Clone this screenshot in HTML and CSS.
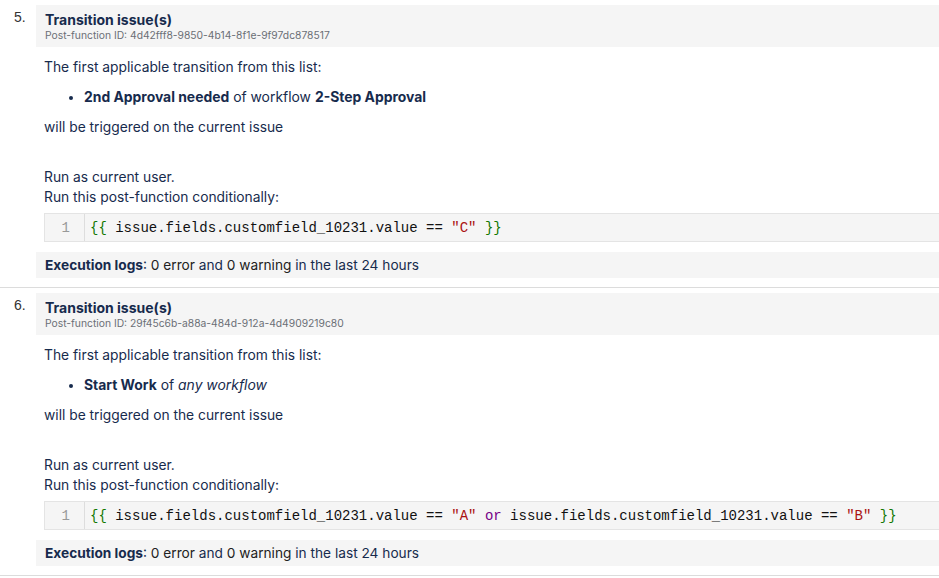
FILE: index.html
```html
<!DOCTYPE html>
<html>
<head>
<meta charset="utf-8">
<link rel="stylesheet" href="styles.css">
</head>
<body>
<div class="list">
  <div class="item">
    <div class="num">5.</div>
    <div class="main">
      <div class="head">
        <div class="title">Transition issue(s)</div>
        <div class="sub">Post-function ID: 4d42fff8-9850-4b14-8f1e-9f97dc878517</div>
      </div>
      <div class="body">
        <p class="line">The first applicable transition from this list:</p>
        <ul class="trans">
          <li><b>2nd Approval needed</b> of workflow <b>2-Step Approval</b></li>
        </ul>
        <p class="line">will be triggered on the current issue</p>
        <p class="line run">Run as current user.</p>
        <p class="line">Run this post-function conditionally:</p>
        <div class="code">
          <div class="gutter">1</div>
          <div class="src"><span class="br">{{</span> issue.fields.customfield_10231.value == <span class="str">"C"</span> <span class="br">}}</span></div>
        </div>
      </div>
      <div class="logs"><b>Execution logs</b>: <span class="k">0 error</span> and <span class="k">0 warning</span> in the last 24 hours</div>
    </div>
  </div>
  <div class="item">
    <div class="num">6.</div>
    <div class="main">
      <div class="head">
        <div class="title">Transition issue(s)</div>
        <div class="sub">Post-function ID: 29f45c6b-a88a-484d-912a-4d4909219c80</div>
      </div>
      <div class="body">
        <p class="line">The first applicable transition from this list:</p>
        <ul class="trans">
          <li><b>Start Work</b> of <i>any workflow</i></li>
        </ul>
        <p class="line">will be triggered on the current issue</p>
        <p class="line run">Run as current user.</p>
        <p class="line">Run this post-function conditionally:</p>
        <div class="code">
          <div class="gutter">1</div>
          <div class="src"><span class="br">{{</span> issue.fields.customfield_10231.value == <span class="str">"A"</span> <span class="kw">or</span> issue.fields.customfield_10231.value == <span class="str">"B"</span> <span class="br">}}</span></div>
        </div>
      </div>
      <div class="logs"><b>Execution logs</b>: <span class="k">0 error</span> and <span class="k">0 warning</span> in the last 24 hours</div>
    </div>
  </div>
</div>
</body>
</html>
```
FILE: styles.css
```css
html, body {
  margin: 0;
  padding: 0;
  background: #ffffff;
}
body {
  font-family: Inter, "Noto Sans", sans-serif;
  font-size: 14px;
  color: #172b4d;
  width: 939px;
  overflow: hidden;
}
.item {
  display: flex;
  padding-top: 5px;
  padding-bottom: 9px;
  border-bottom: 1px solid #dcdcdc;
}
.num {
  width: 22px;
  padding-left: 14px;
  padding-top: 3px;
  font-family: "Liberation Sans", Arial, sans-serif;
  font-size: 14px;
  line-height: 18px;
  color: #333333;
}
.main {
  flex: 1;
  min-width: 0;
}
.head {
  background: #f5f5f5;
  padding: 6px 9px 5px;
}
.title {
  font-weight: 700;
  font-size: 14px;
  line-height: 18px;
}
.sub {
  font-size: 10.3px;
  line-height: 13px;
  color: #6b6f76;
}
.body {
  padding: 10px 0 0 8px;
}
.line {
  margin: 0;
  line-height: 20px;
  font-size: 13.8px;
}
.trans {
  margin: 10px 0;
  padding-left: 40px;
  line-height: 20px;
  font-size: 13.9px;
}
.trans b {
  font-weight: 700;
}
.run {
  margin-top: 30px;
}
.code {
  display: flex;
  margin-top: 6px;
  background: #f5f5f5;
  border: 1px solid #e4e4e4;
  border-right: none;
  height: 25px;
  padding-top: 2px;
  font-family: "Liberation Mono", "DejaVu Sans Mono", monospace;
  font-size: 14px;
  line-height: 25px;
  color: #111111;
}
.gutter {
  width: 40px;
  box-sizing: border-box;
  margin-top: -2px;
  padding-top: 2px;
  padding-right: 14px;
  text-align: right;
  color: #999999;
  border-right: 1px solid #dddddd;
}
.src {
  padding-left: 5px;
  white-space: pre;
}
.br { color: #117700; }
.str { color: #aa1111; }
.kw { color: #770088; }
.logs {
  margin-top: 10px;
  background: #f5f5f5;
  padding: 0 9px;
  height: 26px;
  line-height: 26px;
  font-size: 13.7px;
}
.logs b { font-weight: 700; }
.logs .k { color: #222222; }
```
